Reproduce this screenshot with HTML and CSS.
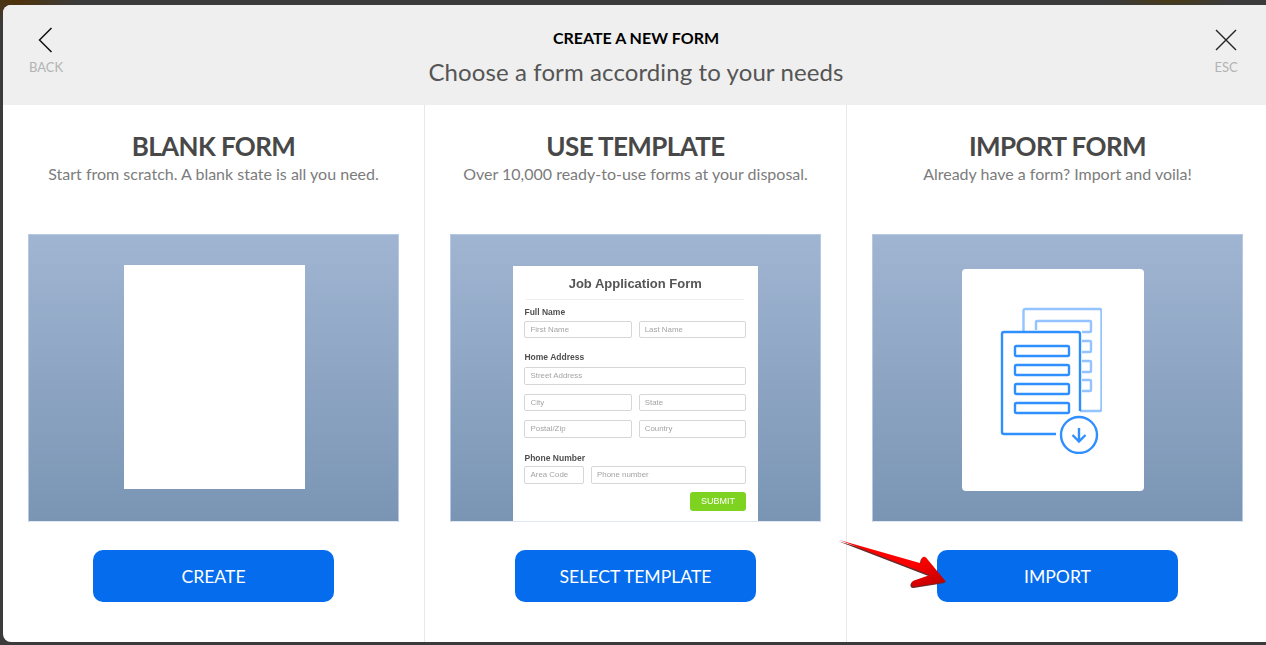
FILE: index.html
```html
<!DOCTYPE html>
<html lang="en">
<head>
<meta charset="utf-8">
<title>Create a new form</title>
<link rel="stylesheet" href="styles.css">
</head>
<body>
<div class="modal">
  <header class="top">
    <a class="nav">
      <svg class="nav-icon" width="30" height="30" viewBox="0 0 30 30"><path d="M20.5 3 8.5 15l12 12" fill="none" stroke="#111" stroke-width="1.5"/></svg>
      <span>BACK</span>
    </a>
    <div class="heading">
      <h1>CREATE A NEW FORM</h1>
      <p>Choose a form according to your needs</p>
    </div>
    <a class="nav">
      <svg class="nav-icon" width="30" height="30" viewBox="0 0 30 30"><path d="M5 5l20 20M25 5 5 25" fill="none" stroke="#222" stroke-width="1.4"/></svg>
      <span>ESC</span>
    </a>
  </header>
  <main class="cols">
    <section class="col">
      <h2>BLANK FORM</h2>
      <p class="sub">Start from scratch. A blank state is all you need.</p>
      <div class="preview"><div class="blank"></div></div>
      <button class="cta">CREATE</button>
    </section>
    <section class="col">
      <h2>USE TEMPLATE</h2>
      <p class="sub">Over 10,000 ready-to-use forms at your disposal.</p>
      <div class="preview">
        <div class="sheet">
          <div class="sheet-title">Job Application Form</div>
          <div class="lbl lbl-first">Full Name</div>
          <div class="row"><div class="inp">First Name</div><div class="inp">Last Name</div></div>
          <div class="lbl lbl-gap">Home Address</div>
          <div class="row"><div class="inp">Street Address</div></div>
          <div class="row row-gap"><div class="inp">City</div><div class="inp">State</div></div>
          <div class="row row-gap"><div class="inp">Postal/Zip</div><div class="inp">Country</div></div>
          <div class="lbl lbl-gap2">Phone Number</div>
          <div class="row"><div class="inp inp-area">Area Code</div><div class="inp">Phone number</div></div>
          <div class="submit-row"><div class="submit">SUBMIT</div></div>
        </div>
      </div>
      <button class="cta">SELECT TEMPLATE</button>
    </section>
    <section class="col">
      <h2>IMPORT FORM</h2>
      <p class="sub">Already have a form? Import and voila!</p>
      <div class="preview">
        <div class="import-card">
          <svg width="120" height="170" viewBox="0 0 120 170">
            <g fill="none" stroke="#93c4ff" stroke-width="2.4">
              <rect x="41.5" y="25" width="78" height="102" rx="2"/>
              <path d="M54 46v-8a1 1 0 0 1 1-1h53a1 1 0 0 1 1 1v9a1 1 0 0 1-1 1h-8"/>
              <path d="M100 57h8a1 1 0 0 1 1 1v9a1 1 0 0 1-1 1h-8M100 77h8a1 1 0 0 1 1 1v9a1 1 0 0 1-1 1h-8M100 96h8a1 1 0 0 1 1 1v9a1 1 0 0 1-1 1h-8"/>
            </g>
            <rect x="20" y="48" width="78" height="102" rx="2" fill="#fff"/>
            <g fill="none" stroke="#2f8fff" stroke-width="2.4">
              <path d="M74 150H22a2 2 0 0 1-2-2V50a2 2 0 0 1 2-2h74a2 2 0 0 1 2 2v77"/>
              <rect x="33" y="62" width="54" height="10" rx="1.5"/>
              <rect x="33" y="81" width="54" height="10" rx="1.5"/>
              <rect x="33" y="100" width="54" height="10" rx="1.5"/>
              <rect x="33" y="119" width="54" height="10" rx="1.5"/>
              <circle cx="97" cy="151" r="18" fill="#fff"/>
              <path d="M97 144v13M90.5 151l6.5 6.5 6.5-6.5"/>
            </g>
          </svg>
        </div>
      </div>
      <button class="cta">IMPORT</button>
    </section>
  </main>
</div>
<svg class="pointer" width="120" height="60" viewBox="0 0 120 60">
  <defs><linearGradient id="red" x1="0" y1="0" x2="1" y2="1"><stop offset="0" stop-color="#f00"/><stop offset="0.6" stop-color="#f00"/><stop offset="1" stop-color="#b80000"/></linearGradient></defs>
  <path d="M4.3 3 85.7 26.3l.8-4.3q1.500-3.500 4.500-1.500L111 44.700 79.500 49.700q-3.500.3-3-3.700.5-2 2.500-2.500L95 38Z" fill="#6b2a2a" transform="translate(-1 1.2)"/>
  <path d="M4.3 3 85.7 26.3l.8-4.300q1.500-3.500 4.500-1.500L111 44.700 79.500 49.700q-3.500.3-3-3.700.5-2 2.500-2.500L95 38Z" fill="url(#red)"/>
</svg>
</body>
</html>
```
FILE: styles.css
```css
* { box-sizing: border-box; }
html, body { height: 100%; }
body {
  margin: 0;
  padding: 5px 0 3px 3px;
  overflow: hidden;
  position: relative;
  font-family: Lato, "Noto Sans", sans-serif;
  background:
    radial-gradient(60px 24px at 16px 0, #4f3208, transparent),
    radial-gradient(60px 8px at 1170px 0, #4a3a14, transparent),
    #3b3b3b;
}
h1, h2, p { margin: 0; }
.modal {
  width: 1270px;
  height: 637px;
  background: #fff;
  border-radius: 8px 0 0 8px;
  overflow: hidden;
  display: flex;
  flex-direction: column;
}
.top {
  height: 100px;
  background: #efefef;
  display: flex;
  justify-content: space-between;
  padding-right: 4px;
}
.nav {
  width: 86px;
  display: flex;
  flex-direction: column;
  align-items: center;
  padding-top: 20px;
  color: #b3b3b3;
  font-size: 13px;
  line-height: 18px;
}
.nav-icon { display: block; margin-bottom: 3px; }
.heading { text-align: center; padding-top: 22px; flex: 1; }
.heading h1 { font-size: 16px; line-height: 22px; font-weight: 700; color: #000; }
.heading p { font-size: 24px; line-height: 32px; color: #555; margin-top: 7px; letter-spacing: 0.1px; }
.cols { flex: 1; display: grid; grid-template-columns: 422px 422px 422px 4px; }
.col {
  border-right: 1px solid #e8e8e8;
  padding: 0 25px;
  display: flex;
  flex-direction: column;
  align-items: center;
}
.col:last-child { border-right-color: transparent; }
h2 { font-size: 26px; line-height: 34px; font-weight: 700; letter-spacing: -0.6px; color: #484848; margin-top: 24px; white-space: nowrap; }
.sub { font-size: 16px; line-height: 20px; color: #7c7c7c; margin-top: 1px; white-space: nowrap; }
.preview {
  flex: none;
  width: 370.4px;
  height: 288px;
  margin-top: 50px;
  border: 1px solid #b7c9e2;
  border-bottom-color: #dfe7f2;
  background: linear-gradient(#a0b5d2, #7a95b4);
  display: flex;
  justify-content: center;
  overflow: hidden;
}
.blank { width: 181px; height: 224px; margin: 30px 0 0 2px; background: #fff; }
.sheet {
  width: 245px;
  margin-top: 31px;
  background: #fff;
  padding: 0 12px 0 11.5px;
  font-family: "Liberation Sans", Arial, sans-serif;
  filter: blur(0.25px);
}
.sheet-title {
  font-size: 13px;
  font-weight: 700;
  line-height: 17px;
  color: #555;
  text-align: center;
  padding: 9px 0 7px;
  margin: 0 1.5px;
  border-bottom: 1px solid #eeeeee;
}
.lbl { font-size: 8.5px; font-weight: 700; line-height: 10px; color: #505050; }
.lbl-first { margin-top: 7px; margin-bottom: 3.5px; }
.lbl-gap { margin-top: 14px; margin-bottom: 5px; }
.lbl-gap2 { margin-top: 15px; margin-bottom: 3.5px; }
.row { display: flex; gap: 7px; }
.row-gap { margin-top: 9px; }
.inp {
  flex: 1;
  height: 17.5px;
  border: 1px solid #d6d6d6;
  border-radius: 2px;
  font-size: 7.9px;
  line-height: 15.5px;
  color: #a4a4a4;
  padding-left: 5px;
}
.inp-area { flex: 0 0 59.5px; }
.submit-row { display: flex; justify-content: flex-end; margin-top: 8px; }
.submit {
  width: 56px;
  height: 19px;
  border-radius: 3px;
  background: #7ed321;
  color: #fff;
  font-size: 9px;
  line-height: 19px;
  text-align: center;
}
.import-card {
  width: 182px;
  height: 222px;
  margin: 34px 9px 0 0;
  background: #fff;
  border-radius: 4px;
  display: flex;
  justify-content: center;
}
.import-card svg { display: block; margin: 15px 0 0 -21px; }
.cta {
  flex: none;
  width: 241px;
  height: 52px;
  margin-top: 28px;
  border: 0;
  border-radius: 10px;
  background: #056ced;
  color: #fff;
  font-family: inherit;
  font-size: 17.6px;
}
.pointer { position: absolute; left: 835px; top: 537px; }
```
